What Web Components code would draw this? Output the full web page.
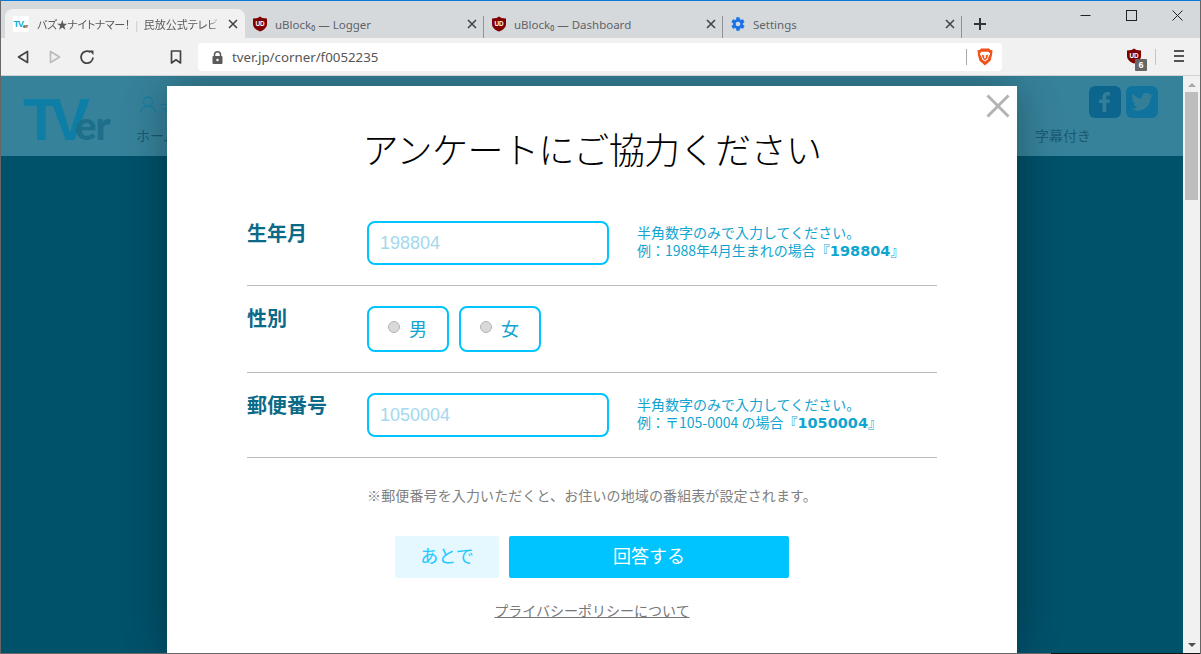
<!DOCTYPE html>
<html lang="ja"><head><meta charset="utf-8"><title>TVer</title>
<style>
html,body{margin:0;padding:0;height:100%;overflow:hidden;background:#00516a}
body{font-family:"Liberation Sans","Noto Sans CJK JP",sans-serif}
app-window{height:654px}
</style></head><body>
<app-window>
  <tab-strip slot="tabs"></tab-strip>
  <nav-bar slot="nav"></nav-bar>
  <page-view slot="page">
    <survey-modal></survey-modal>
  </page-view>
</app-window>
<script>
const UB=(s)=>`<svg width="${s}" height="${s}" viewBox="0 0 16 16"><path d="M8 .5 10.500 2 15 2.600V8c0 3.600-3 6-7 7.500C4 14 1 11.600 1 8V2.600L5.500 2z" fill="#800000"/><text x="8" y="9.800" font-size="6.400" font-weight="700" text-anchor="middle" fill="#fff" font-family="Liberation Sans">UD</text></svg>`;
function def(name,html,init){customElements.define(name,class extends HTMLElement{constructor(){super();this.attachShadow({mode:'open'}).innerHTML=html;}connectedCallback(){init&&init(this)}})}

def('app-window',`<style>
:host{display:flex;flex-direction:column;width:1201px;box-sizing:border-box;border-top:1px solid #0a78d7;border-left:1px solid #666;border-right:1px solid #666;overflow:hidden}
.edge{height:1px;flex:none;background:linear-gradient(90deg,#666 1050px,#141414 1050px)}
</style><slot name="tabs"></slot><slot name="nav"></slot><slot name="page"></slot><div class="edge"></div>`);

def('browser-tab',`<style>
:host{display:flex;align-items:center;box-sizing:border-box;height:100%;position:relative;font:11.5px "Noto Sans","Noto Sans CJK JP",sans-serif;color:#5f6368;width:var(--w,239px);padding:0 7px 0 7px}
:host([active]){background:#f1f1f2;border-radius:8px 8px 0 0;color:#5a5a5a;padding-left:8px;font-size:11px}
:host([sep])::after{content:"";position:absolute;right:0;top:7px;width:1px;height:22px;background:#8f9397}
.ic{width:16px;height:16px;flex:none;display:flex;margin-right:5px}
:host([active]) .ic{margin-right:8px}
.t{flex:1;white-space:nowrap;overflow:hidden;min-width:0;margin-left:2px;padding-top:1px}
:host([active]) .t{margin-left:0;font-feature-settings:"palt";-webkit-mask-image:linear-gradient(90deg,#000 93%,transparent);mask-image:linear-gradient(90deg,#000 93%,transparent)}
svg.x{flex:none;margin-left:6px}
</style><span class="ic"><slot name="icon"></slot></span><span class="t"><slot></slot></span>
<svg class="x" width="10" height="10" viewBox="0 0 10 10"><path d="M1 1l8 8M9 1l-8 8" stroke="#444" stroke-width="1.600"/></svg>`);

def('tab-strip',`<style>
:host{display:block;height:37px;background:#d6d9dc;box-sizing:border-box;padding-top:8px;flex:none}
.row{display:flex;height:29px;padding-left:4px}
.plus{width:36px;display:flex;align-items:center;justify-content:center;margin-top:1px}
.sp{flex:1}
.win{position:absolute;right:1px;top:1px;display:flex}
.win span{width:46px;height:29px;display:flex;align-items:center;justify-content:center}
.fav{display:block}
.bar{color:#c0c8d0;margin:0 1px}
.ttl{letter-spacing:-.4px}
</style>
<div class="row">
<browser-tab active style="--w:240px"><svg slot="icon" class="fav" width="16" height="16" viewBox="0 0 16 16"><rect width="16" height="16" fill="#fff"/><text x="0.500" y="11" font-size="9.500" font-weight="700" fill="#0fb0e0" letter-spacing="-1.500" font-family="Liberation Sans">TV</text><text x="10" y="11.500" font-size="5.500" font-weight="700" fill="#333" font-family="Liberation Sans">er</text></svg><span class="ttl">バズ★ナイトナマー！</span> <span class="bar">|</span> 民放公式テレビ</browser-tab>
<browser-tab sep style="--w:239px"><span slot="icon" id="u1"></span>uBlock₀ — Logger</browser-tab>
<browser-tab sep style="--w:239px"><span slot="icon" id="u2"></span>uBlock₀ — Dashboard</browser-tab>
<browser-tab sep style="--w:239px"><svg slot="icon" width="16" height="16" viewBox="0 0 24 24"><path fill="#1a73e8" d="M19.400 13c.04-.33.06-.66.06-1s-.02-.67-.06-1l2.100-1.650c.2-.15.25-.42.12-.64l-2-3.460c-.12-.22-.39-.3-.61-.22l-2.500 1c-.52-.4-1.080-.73-1.690-.98l-.38-2.650A.49.49 0 0 0 14 2h-4c-.25 0-.46.18-.5.42l-.38 2.650c-.61.25-1.170.59-1.690.98l-2.500-1a.5.5 0 0 0-.61.22l-2 3.460c-.13.22-.07.49.12.64L4.560 11c-.04.33-.07.67-.07 1s.03.67.07 1l-2.110 1.650c-.19.15-.25.42-.12.64l2 3.460c.12.22.39.3.61.22l2.490-1c.52.4 1.080.73 1.690.98l.38 2.650c.04.24.25.42.5.42h4c.25 0 .46-.18.5-.42l.38-2.650c.61-.25 1.170-.59 1.690-.98l2.490 1c.23.09.49 0 .61-.22l2-3.460a.5.5 0 0 0-.12-.64zM12 15.500a3.500 3.500 0 1 1 0-7 3.500 3.500 0 0 1 0 7z"/></svg>Settings</browser-tab>
<span class="plus"><svg width="12" height="12" viewBox="0 0 12 12"><path d="M6 0v12M0 6h12" stroke="#333" stroke-width="2"/></svg></span>
<span class="sp"></span>
</div>
<div class="win">
<span><svg width="11" height="11" viewBox="0 0 11 11"><path d="M.5 5.500h10" stroke="#222"/></svg></span>
<span><svg width="11" height="11" viewBox="0 0 11 11"><rect x=".5" y=".5" width="10" height="10" fill="none" stroke="#222"/></svg></span>
<span><svg width="11" height="11" viewBox="0 0 11 11"><path d="M.5.5l10 10M10.500.5l-10 10" stroke="#222"/></svg></span>
</div>`,el=>{const r=el.shadowRoot;r.getElementById('u1').innerHTML=UB(16);r.getElementById('u2').innerHTML=UB(16);});

def('nav-bar',`<style>
:host{display:flex;align-items:center;height:38px;background:#f1f1f2;box-sizing:border-box;padding:0 0 2px 0;flex:none;border-bottom:1px solid #d0d3d6;position:relative}
.b{position:absolute;top:11px;width:16px;height:16px;display:flex}
.url{position:absolute;left:197px;top:5px;width:804px;height:28px;background:#fff;border-radius:4px;box-sizing:border-box;display:flex;align-items:center;font:13.300px "Noto Sans",sans-serif;color:#555;letter-spacing:0}
.lock{margin:0 9px 0 14px;display:flex}
.sp{flex:1}
.div{width:1px;height:16px;background:#aaa;margin-right:10px}
.bw{margin-right:9px;display:flex}
.badge{position:absolute;left:1134px;top:21px;width:12px;height:12px;background:#666;color:#fff;font:700 9px/12px "Liberation Sans",sans-serif;text-align:center;border-radius:1px}
.v{position:absolute;left:1154px;top:11px;width:1px;height:16px;background:#c4c4c4}
</style>
<span class="b" style="left:14px"><svg width="16" height="16" viewBox="0 0 16 16"><path d="M12.500 2.500v11L3.500 8z" fill="none" stroke="#444" stroke-width="1.700" stroke-linejoin="round"/></svg></span>
<span class="b" style="left:46px"><svg width="16" height="16" viewBox="0 0 16 16"><path d="M3.500 2.500v11l9-5.500z" fill="none" stroke="#bbb" stroke-width="1.700" stroke-linejoin="round"/></svg></span>
<span class="b" style="left:78px"><svg width="16" height="16" viewBox="0 0 16 16"><path d="M14 8.500A6 6 0 1 1 11.500 3.300" fill="none" stroke="#444" stroke-width="1.800"/><path d="M10 1.500h4.500V6z" fill="#444"/></svg></span>
<span class="b" style="left:167px"><svg width="16" height="16" viewBox="0 0 16 16"><path d="M3.500 2h9v12L8 10.800 3.500 14z" fill="none" stroke="#444" stroke-width="1.700" stroke-linejoin="round"/></svg></span>
<div class="url"><span class="lock"><svg width="11" height="13" viewBox="0 0 11 13"><path d="M2.500 5.500V3.800a3 3 0 0 1 6 0v1.700" fill="none" stroke="#5a5a5a" stroke-width="1.500"/><rect x=".5" y="5" width="10" height="8" rx="1" fill="#5a5a5a"/><circle cx="5.500" cy="9" r="1.200" fill="#fff"/></svg></span>tver.jp/corner/f0052235<span class="sp"></span><span class="div"></span><span class="bw"><svg width="16" height="18" viewBox="0 0 16 18"><path d="M4 .5h8l1.500 1.500 2 .3-.5 5-1.500 5.500L8 17.500 2.500 12.800 1 7.300.5 2.300l2-.3z" fill="#f1511b"/><path d="M4.500 3.800h7l1.800 2-1.600 2.700-1 3L8 13.500 5.300 11.500l-1-3L2.700 5.800z" fill="#fff"/><path d="M4.800 6.500l2.400 1v2.800h1.600V7.500l2.400-1-.8 3.500L8 12.500 5.600 10z" fill="#f1511b"/></svg></span></div>
<span class="b" style="left:1125px;top:10px" id="ub"></span>
<span class="badge">6</span><span class="v"></span>
<span class="b" style="left:1172px;top:11px"><svg width="12" height="14" viewBox="0 0 12 14"><path d="M1 2h10M1 7h10M1 12h10" stroke="#555" stroke-width="2"/></svg></span>`,el=>{el.shadowRoot.getElementById('ub').innerHTML=UB(16)});

def('page-view',`<style>
:host{display:block;position:relative;height:577px;background:#00516a;overflow:hidden;flex:none}
.hd{height:80px;background:#36829a;position:relative}
.logo{position:absolute;left:22px;top:6px;width:100px;height:74px;display:block}
.user{position:absolute;left:139px;top:20px}
.my{position:absolute;left:158px;top:21px;font:14px "Noto Sans CJK JP",sans-serif;color:#1a7ea4;white-space:nowrap}
.nav{position:absolute;left:135px;top:49px;font:14px "Noto Sans CJK JP",sans-serif;color:#1b5a70;white-space:nowrap}
.jm{position:absolute;left:1034px;top:49px;font:14px "Noto Sans CJK JP",sans-serif;color:#1b5a70;white-space:nowrap}
.sq{position:absolute;top:10px;width:32px;height:32px;border-radius:6px;display:flex;align-items:center;justify-content:center}
.sb{position:absolute;right:0;top:0;bottom:0;width:17px;background:#f1f1f1;display:flex;flex-direction:column;align-items:center}
.th{width:13px;height:108px;background:#bdbdbd;margin-top:5px}
.ar{margin-top:7px;width:0;height:0;border:4px solid transparent;border-top:0;border-bottom:4px solid #a8a8a8}
.sp{flex:1}
.dn{margin-bottom:6px;width:0;height:0;border:4px solid transparent;border-bottom:0;border-top:4px solid #505050}
</style>
<div class="hd">
<svg class="logo" viewBox="0 0 100 74"><defs><linearGradient id="g" x1="0" y1="0" x2="0" y2="1"><stop offset="0" stop-color="#1287a8"/><stop offset="1" stop-color="#07739f"/></linearGradient></defs>
<text x="0" y="58" font-family="Liberation Sans" font-weight="700" font-size="60" fill="#0d7ea5"><tspan>T</tspan><tspan dx="-9.600">V</tspan><tspan dx="-15" font-family="Lato" font-weight="900" font-size="40" fill="#1d6f8a" letter-spacing="-1">er</tspan></text></svg>
<svg class="user" width="16" height="18" viewBox="0 0 16 18" fill="none" stroke="#1a7ea4" stroke-width="1.300"><circle cx="8" cy="5.500" r="4.500"/><path d="M.7 17c.6-4.500 3.300-7 7.300-7s6.700 2.500 7.300 7"/></svg>
<span class="my">マイページ</span>
<span class="nav">ホーム</span><span class="jm">字幕付き</span>
<span class="sq" style="left:1088px;background:#0c658c"><svg width="12" height="20" viewBox="0 0 12 20"><path fill="#347f97" d="M3.500 20v-9H0V7.500h3.500V5c0-3 1.800-5 4.800-5H11v3.500H9c-1.200 0-1.700.6-1.700 1.700v2.300H11L10.500 11H7.300v9z"/></svg></span>
<span class="sq" style="left:1125px;background:#10739e"><svg width="22" height="18" viewBox="0 0 24 20"><path fill="#347f97" d="M24 2.400c-.9.400-1.800.7-2.800.8 1-.6 1.800-1.600 2.200-2.700-1 .6-2 1-3.100 1.200A4.900 4.900 0 0 0 11.900 6.200 14 14 0 0 1 1.700 1 4.900 4.900 0 0 0 3.200 7.600c-.8 0-1.600-.2-2.200-.6 0 2.400 1.700 4.400 3.900 4.900-.7.200-1.500.2-2.200.1.600 2 2.400 3.400 4.600 3.400A9.900 9.900 0 0 1 0 17.400 14 14 0 0 0 7.500 19.600c9.100 0 14.300-7.700 14-14.600 1-.7 1.800-1.600 2.500-2.600z"/></svg></span>
</div>
<div class="sb"><span class="ar"></span><span class="th"></span><span class="sp"></span><span class="dn"></span></div>
<slot></slot>`);

def('form-row',`<style>
:host{display:flex;box-sizing:border-box;border-bottom:1px solid #bbb;width:690px}
.l{width:120px;flex:none;font:700 20px/26px "Noto Sans CJK JP",sans-serif;color:#0a6a88;margin-top:-1px;white-space:nowrap}
.c{flex:none}
</style><div class="l"><slot name="label"></slot></div><div class="c"><slot></slot></div>`);

def('text-field',`<style>
:host{display:flex;align-items:center;gap:28px}
.in{box-sizing:border-box;width:242px;height:44px;border:2px solid #00c4ff;border-radius:8px;background:#fff;display:flex;align-items:center;padding-left:11px;font:18px "Liberation Sans",sans-serif;color:#a3d8ee}
.h{font:14px/18px "Noto Sans CJK JP",sans-serif;color:#10a5d0;white-space:nowrap;margin-top:-4px}
::slotted(b){font-family:"DejaVu Sans";font-weight:700;font-size:14.500px}
</style><div class="in"><slot name="ph"></slot></div><div class="h"><slot></slot></div>`);

def('radio-pill',`<style>
:host{box-sizing:border-box;display:flex;align-items:center;justify-content:center;width:82px;height:46px;border:2px solid #00c4ff;border-radius:8px;font:18px "Noto Sans CJK JP",sans-serif;color:#10a5d0;gap:9px;padding-right:1px}
i{width:10px;height:10px;border-radius:50%;background:#d9d9d9;border:1px solid #b5b5b5;margin-top:-4px}
span{margin-top:-3px}
</style><i></i><span><slot></slot></span>`);

def('survey-modal',`<style>
:host{position:absolute;left:166px;top:10px;width:850px;height:567px;background:#fff;display:flex;flex-direction:column;align-items:center;box-sizing:border-box;box-shadow:0 0 40px rgba(0,0,0,.32)}
.x{position:absolute;right:7px;top:8px}
h1{margin:37px 0 0;height:50px;font:300 36px/50px "Noto Sans CJK JP",sans-serif;color:#000;letter-spacing:-.015em;white-space:nowrap}
.form{margin-top:48px;display:flex;flex-direction:column;width:690px;align-items:stretch}
.radios{display:flex;gap:10px}
form-row.a{height:65px}
form-row.b{height:87px;padding-top:20px}
form-row.c{height:85px;padding-top:20px}
.note{margin-top:28px;font:14px/18px "Noto Sans CJK JP",sans-serif;color:#808080;white-space:nowrap;letter-spacing:.12px}
.btns{display:flex;gap:10px;margin-top:32px}
.btn{box-sizing:border-box;height:42px;padding-bottom:4px;display:flex;align-items:center;justify-content:center;border-radius:2px;font:18px "Noto Sans CJK JP",sans-serif}
.later{width:104px;background:#e5f8ff;color:#20c8ff}
.go{width:280px;background:#00c4ff;color:#fff}
a{margin-top:22px;font:14px/20px "Noto Sans CJK JP",sans-serif;color:#777;text-decoration:underline}
</style>
<svg class="x" width="24" height="24" viewBox="0 0 24 24"><path d="M1.500 1.500l21 21M22.500 1.500l-21 21" stroke="#b3b3b3" stroke-width="3"/></svg>
<h1>アンケートにご協力ください</h1>
<div class="form">
<form-row class="a"><span slot="label">生年月</span><text-field><span slot="ph">198804</span>半角数字のみで入力してください。<br>例：1988年4月生まれの場合『<b>198804</b>』</text-field></form-row>
<form-row class="b"><span slot="label">性別</span><div class="radios"><radio-pill>男</radio-pill><radio-pill>女</radio-pill></div></form-row>
<form-row class="c"><span slot="label">郵便番号</span><text-field><span slot="ph">1050004</span>半角数字のみで入力してください。<br>例：〒105-0004 の場合『<b>1050004</b>』</text-field></form-row>
</div>
<div class="note">※郵便番号を入力いただくと、お住いの地域の番組表が設定されます。</div>
<div class="btns"><div class="btn later">あとで</div><div class="btn go">回答する</div></div>
<a>プライバシーポリシーについて</a>`);
</script>
</body></html>
